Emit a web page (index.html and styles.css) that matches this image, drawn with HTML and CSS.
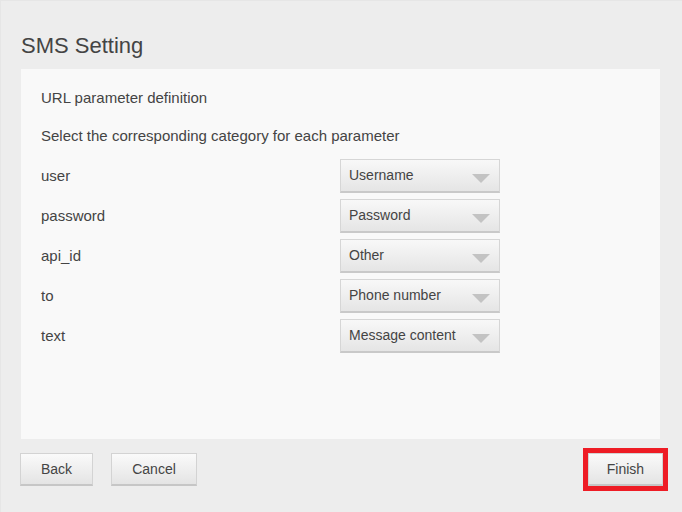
FILE: index.html
```html
<!DOCTYPE html>
<html>
<head>
<meta charset="utf-8">
<link rel="stylesheet" href="styles.css">
</head>
<body>
<div class="page">
  <h1 class="title">SMS Setting</h1>
  <div class="panel">
    <p class="line first">URL parameter definition</p>
    <p class="line second">Select the corresponding category for each parameter</p>
    <div class="rows">
      <div class="row"><span class="label">user</span><div class="select"><span>Username</span><i class="arrow"></i></div></div>
      <div class="row"><span class="label">password</span><div class="select"><span>Password</span><i class="arrow"></i></div></div>
      <div class="row"><span class="label">api_id</span><div class="select"><span>Other</span><i class="arrow"></i></div></div>
      <div class="row"><span class="label">to</span><div class="select"><span>Phone number</span><i class="arrow"></i></div></div>
      <div class="row"><span class="label">text</span><div class="select"><span>Message content</span><i class="arrow"></i></div></div>
    </div>
  </div>
  <div class="footer">
    <div class="left">
      <button class="btn back">Back</button>
      <button class="btn cancel">Cancel</button>
    </div>
    <div class="highlight">
      <button class="btn finish">Finish</button>
    </div>
  </div>
</div>
</body>
</html>
```
FILE: styles.css
```css
html, body {
  margin: 0;
  padding: 0;
  background: #ededed;
}
body {
  width: 682px;
  height: 512px;
  overflow: hidden;
  font-family: Arial, "Liberation Sans", sans-serif;
  color: #444;
}
.page {
  box-sizing: border-box;
  width: 682px;
  height: 512px;
  border-top: 1px solid #e6e6e6;
  border-left: 1px solid #e6e6e6;
}
.title {
  margin: 32px 0 10px 20px;
  font-size: 22px;
  line-height: 26px;
  font-weight: normal;
  color: #444;
}
.panel {
  margin-left: 20px;
  width: 639px;
  height: 370px;
  box-sizing: border-box;
  background: #f9f9f9;
  padding: 19px 20px 0 20px;
}
.line {
  margin: 0;
  font-size: 15px;
  line-height: 20px;
}
.second {
  margin-top: 18px;
}
.rows {
  margin-top: 13px;
  display: flex;
  flex-direction: column;
  gap: 6px;
}
.row {
  display: flex;
  align-items: center;
  height: 34px;
}
.label {
  width: 299px;
  font-size: 15px;
  line-height: 20px;
}
.select {
  position: relative;
  box-sizing: border-box;
  width: 160px;
  height: 34px;
  border: 1px solid #d6d6d6;
  border-bottom: 2px solid #c9c9c9;
  background: linear-gradient(#f8f8f8, #e5e5e5);
  padding: 0 8px;
  font-size: 14px;
  line-height: 30px;
  color: #444;
}
.arrow {
  position: absolute;
  right: 9px;
  top: 14px;
  width: 0;
  height: 0;
  border-left: 9px solid transparent;
  border-right: 9px solid transparent;
  border-top: 9px solid #c3c3c3;
}
.footer {
  display: flex;
  justify-content: space-between;
  align-items: flex-start;
  margin-top: 9px;
  padding: 0 14px 0 19px;
}
.left {
  display: flex;
  gap: 18px;
  padding-top: 5px;
}
.btn {
  box-sizing: border-box;
  height: 33px;
  border: 1px solid #d3d3d3;
  border-bottom: 2px solid #c6c6c6;
  background: linear-gradient(#fafafa, #e4e4e4);
  font-family: Arial, "Liberation Sans", sans-serif;
  font-size: 14px;
  color: #444;
  padding: 0;
  margin: 0;
}
.back { width: 73px; }
.cancel { width: 86px; }
.finish { width: 75px; display: block; }
.highlight {
  border: 5px solid #ee1c25;
}
```
